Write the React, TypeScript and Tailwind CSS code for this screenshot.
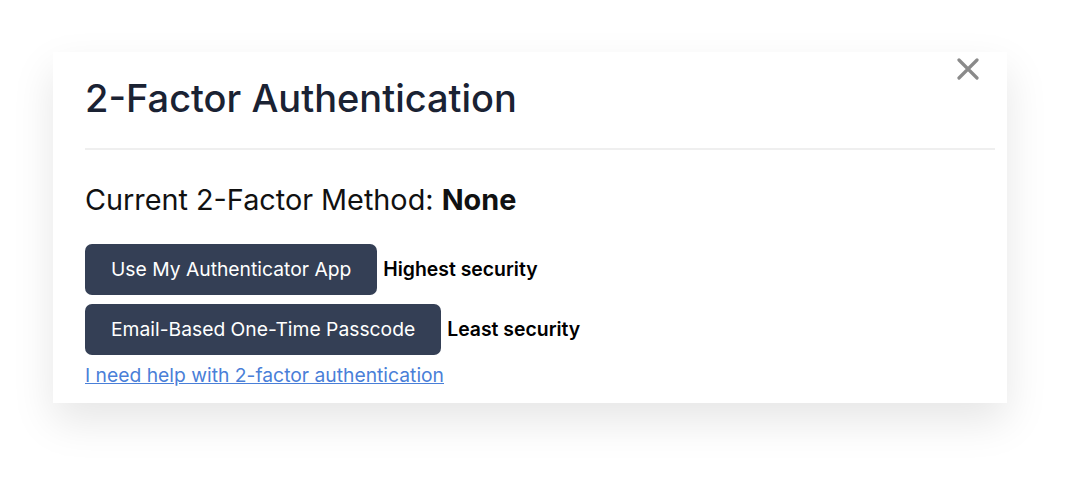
import React from "react";

export default function App() {
  return (
    <div className="w-[1080px] h-[477px] bg-white overflow-hidden" style={{ fontFamily: "Inter, 'Noto Sans', sans-serif" }}>
      <div className="pt-[52px] pl-[53px]">
        <div className="relative w-[954px] h-[351px] bg-white shadow-[0_18px_40px_rgba(0,0,0,0.10)] px-[32px] pt-[23px]">
          <button className="absolute right-[28px] top-[6px] w-[22px] h-[22px] flex items-center justify-center">
            <svg width="22" height="22" viewBox="0 0 22 22">
              <path d="M2 2 L20 20 M20 2 L2 20" stroke="#8a8a8a" strokeWidth="3.2" strokeLinecap="round" />
            </svg>
          </button>
          <h1 className="text-[38px] leading-[46px] text-[#1a2233] font-medium">2-Factor Authentication</h1>
          <div className="mt-[27px] mr-[-20px] h-[2px] bg-[#efefef]" />
          <div className="mt-[32px] text-[28.8px] leading-[35px] text-[#111]">
            Current 2-Factor Method: <span className="font-bold">None</span>
          </div>
          <div className="mt-[27px] flex flex-col gap-[9px]">
            <div className="flex items-center gap-[6px]">
              <button className="h-[51px] px-[26px] rounded-[7px] bg-[#343f55] text-white text-[19.3px]">Use My Authenticator App</button>
              <span className="text-[19.4px] font-semibold text-black">Highest security</span>
            </div>
            <div className="flex items-center gap-[6px]">
              <button className="h-[51px] px-[26px] rounded-[7px] bg-[#343f55] text-white text-[19.3px]">Email-Based One-Time Passcode</button>
              <span className="text-[19.4px] font-semibold text-black">Least security</span>
            </div>
          </div>
          <a href="#" className="block mt-[9px] text-[19.3px] leading-[23px] text-[#4a7fd8] underline">I need help with 2-factor authentication</a>
        </div>
      </div>
    </div>
  );
}
